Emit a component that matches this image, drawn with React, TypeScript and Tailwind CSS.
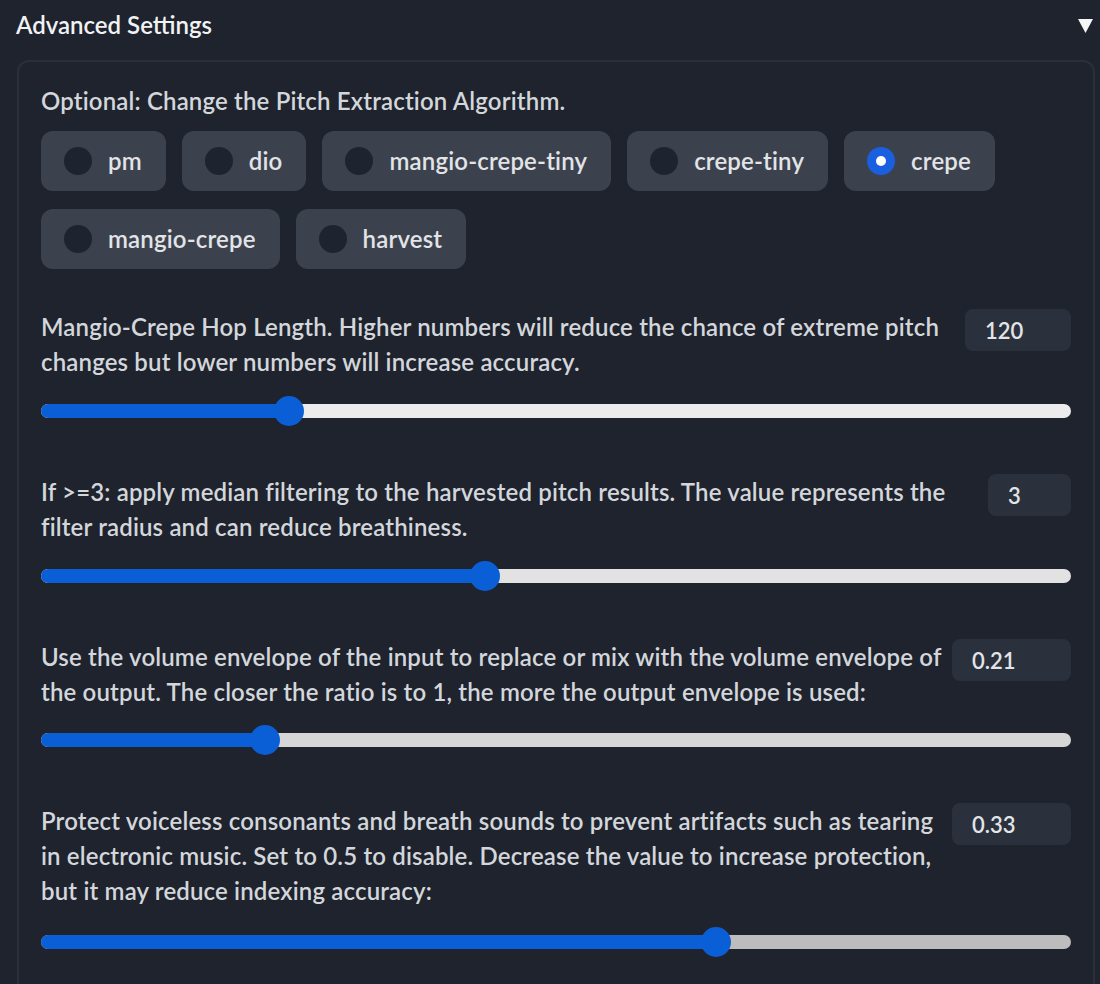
import React from 'react';

const options = ['pm', 'dio', 'mangio-crepe-tiny', 'crepe-tiny', 'crepe', 'mangio-crepe', 'harvest'];

interface SliderSetting {
  lines: string[];
  value: string;
  fraction: number;
  boxWidth: string;
  restColor: string;
  gap: string;
}

const sliders: SliderSetting[] = [
  {
    lines: [
      'Mangio-Crepe Hop Length. Higher numbers will reduce the chance of extreme pitch',
      'changes but lower numbers will increase accuracy.',
    ],
    value: '120',
    fraction: 0.241,
    boxWidth: 'w-[106px]',
    restColor: 'bg-[#ececec]',
    gap: 'mt-[17px]',
  },
  {
    lines: [
      'If >=3: apply median filtering to the harvested pitch results. The value represents the',
      'filter radius and can reduce breathiness.',
    ],
    value: '3',
    fraction: 0.431,
    boxWidth: 'w-[83px]',
    restColor: 'bg-[#e2e2e2]',
    gap: 'mt-[17px]',
  },
  {
    lines: [
      'Use the volume envelope of the input to replace or mix with the volume envelope of',
      'the output. The closer the ratio is to 1, the more the output envelope is used:',
    ],
    value: '0.21',
    fraction: 0.217,
    boxWidth: 'w-[119px]',
    restColor: 'bg-[#d6d6d6]',
    gap: 'mt-[16px]',
  },
  {
    lines: [
      'Protect voiceless consonants and breath sounds to prevent artifacts such as tearing',
      'in electronic music. Set to 0.5 to disable. Decrease the value to increase protection,',
      'but it may reduce indexing accuracy:',
    ],
    value: '0.33',
    fraction: 0.655,
    boxWidth: 'w-[119px]',
    restColor: 'bg-[#bdbdbd]',
    gap: 'mt-[19px]',
  },
];

function Radio({ label, checked }: { label: string; checked?: boolean }) {
  return (
    <div className="flex items-center h-[60px] pl-[23px] pr-[24px] rounded-xl bg-[#3b424d]">
      {checked ? (
        <span className="w-[28px] h-[28px] rounded-full bg-[#1a5fe0] flex items-center justify-center">
          <span className="w-[10px] h-[10px] rounded-full bg-white" />
        </span>
      ) : (
        <span className="w-[28px] h-[28px] rounded-full bg-[#1d2430]" />
      )}
      <span className="ml-4 text-[24px] text-[#e2e4e8]">{label}</span>
    </div>
  );
}

function Slider({ setting }: { setting: SliderSetting }) {
  const pct = `${setting.fraction * 100}%`;
  return (
    <div>
      <div className="flex items-start justify-between">
        <div className="text-[24px] leading-[35px] text-[#d3d6db] whitespace-nowrap">
          {setting.lines.map((line, i) => (
            <div key={i}>{line}</div>
          ))}
        </div>
        <div
          className={`${setting.boxWidth} h-[42px] shrink-0 rounded-lg bg-[#2a313c] pl-[20px] flex items-center text-[22px] tracking-normal text-[#e2e4e8]`}
        >
          {setting.value}
        </div>
      </div>
      <div className={`relative h-[30px] ${setting.gap} flex items-center`}>
        <div className={`w-full h-[14px] rounded-full ${setting.restColor} overflow-hidden`}>
          <div className="h-full bg-[#0b5fd6]" style={{ width: pct }} />
        </div>
        <div
          className="absolute top-0 w-[30px] h-[30px] -ml-[15px] rounded-full bg-[#0b5fd6]"
          style={{ left: pct }}
        />
      </div>
    </div>
  );
}

export default function App() {
  return (
    <div className="min-h-screen bg-[#1e232d] font-['Lato',sans-serif] font-semibold tracking-[0.01em] overflow-hidden">
      <div className="flex items-center justify-between h-[50px] pl-4 pr-[6px]">
        <span className="text-[24px] font-semibold tracking-normal text-[#f1f2f4]">Advanced Settings</span>
        <svg width="17" height="17" viewBox="0 0 17 17">
          <path d="M1 2 H16 L8.5 16 Z" fill="#f5f5f5" />
        </svg>
      </div>
      <div className="ml-[17px] mr-[5px] mt-[10px] border-2 border-[#2a303a] rounded-xl px-[22px] pt-[22px] pb-10">
        <div className="text-[24px] leading-[33px] text-[#d3d6db]">
          Optional: Change the Pitch Extraction Algorithm.
        </div>
        <div className="flex flex-wrap gap-x-4 gap-y-[18px] mt-[14px]">
          {options.map(o => (
            <Radio key={o} label={o} checked={o === 'crepe'} />
          ))}
        </div>
        <div className="mt-10 flex flex-col gap-[48px]">
          {sliders.map((s, i) => (
            <Slider key={i} setting={s} />
          ))}
        </div>
      </div>
    </div>
  );
}
